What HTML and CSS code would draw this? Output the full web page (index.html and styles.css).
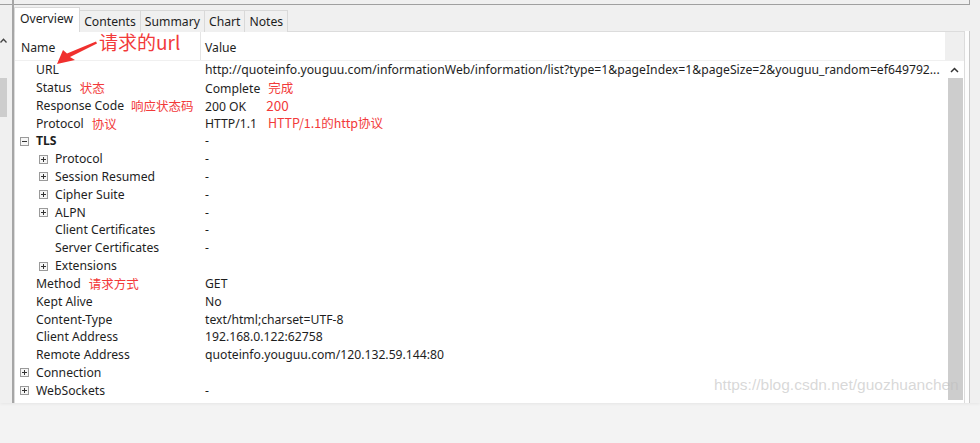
FILE: index.html
```html
<!DOCTYPE html>
<html>
<head>
<meta charset="utf-8">
<link rel="stylesheet" href="styles.css">
</head>
<body>
<div class="window">
  <div class="gutter">
    <div class="gtop"></div>
    <div class="garrow"><svg width="7" height="5" viewBox="0 0 7 5"><path d="M0.5 4.5 L3.5 1.2 L6.5 4.5" fill="none" stroke="#444" stroke-width="1.3"/></svg></div>
    <div class="gthumb"></div>
  </div>
  <div class="main">
    <div class="topline"></div>
    <div class="tabs">
      <div class="tab active">Overview</div>
      <div class="tab">Contents</div>
      <div class="tab">Summary</div>
      <div class="tab">Chart</div>
      <div class="tab">Notes</div>
    </div>
    <div class="panelrow">
      <div class="panel">
        <div class="grid">
          <div class="head">
            <div class="hname">Name</div>
            <div class="hvalue">Value</div>
          </div>
          <div class="rows">
            <div class="row"><div class="name l0"><span class="exp"></span>URL</div><div class="val url">http://quoteinfo.youguu.com/informationWeb/information/list?type=1&amp;pageIndex=1&amp;pageSize=2&amp;youguu_random=ef649792...</div></div>
            <div class="row"><div class="name l0"><span class="exp"></span>Status<span class="note">状态</span></div><div class="val">Complete<span class="note n1">完成</span></div></div>
            <div class="row"><div class="name l0"><span class="exp"></span>Response Code<span class="note n2">响应状态码</span></div><div class="val">200 OK<span class="note n3">200</span></div></div>
            <div class="row"><div class="name l0"><span class="exp"></span>Protocol<span class="note">协议</span></div><div class="val">HTTP/1.1<span class="note n4">HTTP/1.1的http协议</span></div></div>
            <div class="row"><div class="name l0 bold"><span class="exp"><svg width="9" height="9" viewBox="0 0 9 9"><rect x="0.5" y="0.5" width="8" height="8" fill="#f6f6f6" stroke="#9a9a9a"/><path d="M2 4.5 H7" stroke="#333"/></svg></span>TLS</div><div class="val">-</div></div>
            <div class="row"><div class="name l1"><span class="exp"><svg width="9" height="9" viewBox="0 0 9 9"><rect x="0.5" y="0.5" width="8" height="8" fill="#f6f6f6" stroke="#9a9a9a"/><path d="M2 4.5 H7 M4.5 2 V7" stroke="#333"/></svg></span>Protocol</div><div class="val">-</div></div>
            <div class="row"><div class="name l1"><span class="exp"><svg width="9" height="9" viewBox="0 0 9 9"><rect x="0.5" y="0.5" width="8" height="8" fill="#f6f6f6" stroke="#9a9a9a"/><path d="M2 4.5 H7 M4.5 2 V7" stroke="#333"/></svg></span>Session Resumed</div><div class="val">-</div></div>
            <div class="row"><div class="name l1"><span class="exp"><svg width="9" height="9" viewBox="0 0 9 9"><rect x="0.5" y="0.5" width="8" height="8" fill="#f6f6f6" stroke="#9a9a9a"/><path d="M2 4.5 H7 M4.5 2 V7" stroke="#333"/></svg></span>Cipher Suite</div><div class="val">-</div></div>
            <div class="row"><div class="name l1"><span class="exp"><svg width="9" height="9" viewBox="0 0 9 9"><rect x="0.5" y="0.5" width="8" height="8" fill="#f6f6f6" stroke="#9a9a9a"/><path d="M2 4.5 H7 M4.5 2 V7" stroke="#333"/></svg></span>ALPN</div><div class="val">-</div></div>
            <div class="row"><div class="name l1"><span class="exp"></span>Client Certificates</div><div class="val">-</div></div>
            <div class="row"><div class="name l1"><span class="exp"></span>Server Certificates</div><div class="val">-</div></div>
            <div class="row"><div class="name l1"><span class="exp"><svg width="9" height="9" viewBox="0 0 9 9"><rect x="0.5" y="0.5" width="8" height="8" fill="#f6f6f6" stroke="#9a9a9a"/><path d="M2 4.5 H7 M4.5 2 V7" stroke="#333"/></svg></span>Extensions</div><div class="val"></div></div>
            <div class="row"><div class="name l0"><span class="exp"></span>Method<span class="note">请求方式</span></div><div class="val">GET</div></div>
            <div class="row"><div class="name l0"><span class="exp"></span>Kept Alive</div><div class="val">No</div></div>
            <div class="row"><div class="name l0"><span class="exp"></span>Content-Type</div><div class="val">text/html;charset=UTF-8</div></div>
            <div class="row"><div class="name l0"><span class="exp"></span>Client Address</div><div class="val">192.168.0.122:62758</div></div>
            <div class="row"><div class="name l0"><span class="exp"></span>Remote Address</div><div class="val">quoteinfo.youguu.com/120.132.59.144:80</div></div>
            <div class="row"><div class="name l0"><span class="exp"><svg width="9" height="9" viewBox="0 0 9 9"><rect x="0.5" y="0.5" width="8" height="8" fill="#f6f6f6" stroke="#9a9a9a"/><path d="M2 4.5 H7 M4.5 2 V7" stroke="#333"/></svg></span>Connection</div><div class="val"></div></div>
            <div class="row"><div class="name l0"><span class="exp"><svg width="9" height="9" viewBox="0 0 9 9"><rect x="0.5" y="0.5" width="8" height="8" fill="#f6f6f6" stroke="#9a9a9a"/><path d="M2 4.5 H7 M4.5 2 V7" stroke="#333"/></svg></span>WebSockets</div><div class="val">-</div></div>
          </div>
        </div>
        <div class="vscroll">
          <div class="vcorner"></div>
          <div class="varrow"><svg width="9" height="6" viewBox="0 0 9 6"><path d="M1 5 L4.5 1.5 L8 5" fill="none" stroke="#333" stroke-width="1.5"/></svg></div>
          <div class="vthumb"></div>
        </div>
      </div>
      <div class="edge"></div>
    </div>
  </div>
</div>
<div class="callout">请求的url</div>
<svg class="arrow" width="50" height="28" viewBox="0 0 50 28"><path d="M7 26 L13 12 L17 15.5 L46 3.5 L47 5.5 L20 19 L25 22 Z" fill="#f0302e"/></svg>
<div class="watermark">https://blog.csdn.net/guozhuanchen</div>
</body>
</html>
```
FILE: styles.css
```css
html, body {
  margin: 0;
  padding: 0;
}
body {
  background: #f3f3f3;
  width: 980px;
  height: 443px;
  overflow: hidden;
  position: relative;
  font-family: "Noto Sans", "Noto Sans CJK SC", sans-serif;
  font-size: 12.2px;
  color: #1e1e1e;
}
.window {
  display: flex;
  height: 403px;
  background: #f0f0f0;
  box-shadow: 0 1px 3px rgba(0,0,0,0.06);
}
.gutter {
  width: 12px;
  border-right: 2px solid #a6a6a6;
  display: flex;
  flex-direction: column;
  position: relative;
}
.gtop {
  height: 4px;
  border-bottom: 1px solid #a0a0a0;
}
.garrow {
  margin-top: 33px;
  height: 5px;
  line-height: 0;
}
.gthumb {
  margin-top: 35px;
  width: 7px;
  height: 39px;
  background: #cdcdcd;
}
.main {
  flex: 1;
  display: flex;
  flex-direction: column;
}
.topline {
  height: 4px;
  border-bottom: 1px solid #a0a0a0;
  border-right: 1px solid #a0a0a0;
  margin-right: 10px;
}
.tabs {
  display: flex;
  align-items: flex-end;
  margin-top: 3px;
  margin-left: 0;
  height: 24px;
  position: relative;
  z-index: 1;
  margin-bottom: -1px;
}
.tab {
  height: 21px;
  line-height: 22px;
  padding: 0 4px 0 4px;
  border: 1px solid #d9d9d9;
  border-bottom: none;
  border-left: none;
  background: #f0f0f0;
  white-space: nowrap;
}
.tab.active {
  height: 24px;
  line-height: 22px;
  padding: 0 6px 0 5px;
  background: #fff;
  border-left: 1px solid #d9d9d9;
  border-color: #d9d9d9;
}
.panelrow {
  flex: 1;
  display: flex;
  margin-left: 0;
  margin-right: 10px;
}
.panel {
  flex: 1;
  display: flex;
  background: #fff;
  border: 1px solid #dcdcdc;
  border-bottom: none;
}
.edge {
  width: 4px;
  background: #fdfdfd;
  border-right: 1px solid #c9c9c9;
}
.grid {
  flex: 1;
  display: flex;
  flex-direction: column;
  min-width: 0;
}
.head {
  display: grid;
  grid-template-columns: 186px 1fr;
  height: 28px;
  border-bottom: 1px solid #f0f0f0;
}
.hname {
  padding-left: 6px;
  border-right: 1px solid #e5e5e5;
  height: 28px;
  line-height: 31px;
}
.hvalue {
  padding-left: 4px;
  line-height: 31px;
}
.rows {
  display: flex;
  flex-direction: column;
}
.row {
  display: grid;
  grid-template-columns: 187px 1fr;
  height: 17.83px;
  line-height: 17.83px;
  white-space: nowrap;
}
.name {
  display: flex;
  align-items: center;
}
.name.l0 {
  padding-left: 5px;
}
.name.l1 {
  padding-left: 24px;
}
.name.bold {
  font-weight: bold;
}
.exp {
  width: 9px;
  height: 9px;
  margin-right: 7px;
  line-height: 0;
  flex: none;
}
.val {
  padding-left: 3px;
}
.val.url {
  letter-spacing: 0.01px;
  overflow: hidden;
}
.note {
  color: #f23a3a;
  font-family: "Noto Sans CJK SC", "Noto Sans", sans-serif;
  font-size: 12.5px;
  margin-left: 8px;
}
.note.n1 {
  margin-left: 8px;
}
.note.n2 {
  margin-left: 7px;
}
.note.n3 {
  margin-left: 20px;
  font-size: 13.5px;
}
.note.n4 {
  margin-left: 11px;
}
.vscroll {
  width: 19px;
  display: flex;
  flex-direction: column;
}
.vcorner {
  height: 29px;
  background: #efefef;
}
.varrow {
  height: 17px;
  display: flex;
  align-items: center;
  justify-content: center;
  line-height: 0;
}
.vthumb {
  margin: 0 1px 3px 3px;
  flex: 1;
  background: #cdcdcd;
}
.callout {
  position: absolute;
  left: 99px;
  top: 32px;
  color: #f23a3a;
  font-family: "Noto Sans CJK SC", "Noto Sans", sans-serif;
  font-size: 19px;
  line-height: 20px;
}
.arrow {
  position: absolute;
  left: 50px;
  top: 38px;
}
.watermark {
  position: absolute;
  left: 714px;
  top: 376px;
  font-family: "Liberation Sans", Arial, sans-serif;
  font-size: 15.5px;
  color: rgba(190,190,190,0.6);
  white-space: nowrap;
}
```
